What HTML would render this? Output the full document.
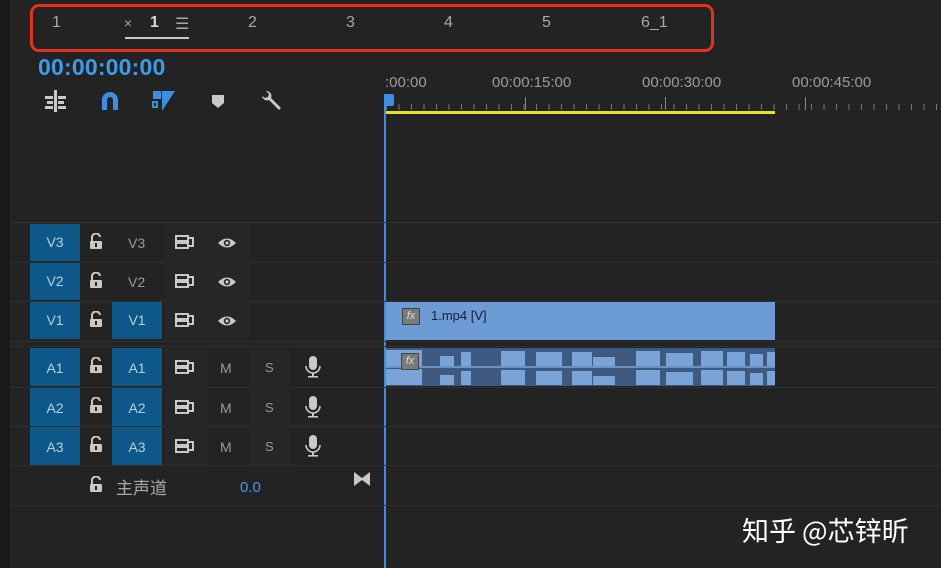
<!DOCTYPE html>
<html><head><meta charset="utf-8"><style>
body{margin:0;width:941px;height:568px;background:#232323;overflow:hidden;position:relative;font-family:"Liberation Sans","Noto Sans CJK SC",sans-serif}
.a{position:absolute}
.tab{position:absolute;top:14px;color:#a8a8a8;font-size:16px}
.row{position:absolute;left:10px;width:931px;height:1px;background:#303030}
.blue{position:absolute;background:#0d5888;color:#b8cfe0;font-size:14px;text-align:center;width:50px;height:37px;line-height:37px}
.lbl{position:absolute;color:#9a9a9a;font-size:14px}
.ic{position:absolute}
.t{position:absolute;top:73px;color:#9c9c9c;font-size:15px}
</style></head><body>
<div class="a" style="left:0;top:0;width:10px;height:568px;background:#1a1a1a"></div>
<div class="a" style="left:30px;top:4px;width:678px;height:42px;border:3px solid #e4321f;border-radius:9px"></div>
<span class="tab" style="left:52px">1</span>
<span class="tab" style="left:124px;font-size:14px;top:15px">×</span>
<span class="tab" style="left:150px;color:#d8d8d8;font-weight:bold">1</span>
<span class="tab" style="left:175px">☰</span>
<div class="a" style="left:125px;top:37px;width:64px;height:2px;background:#c8c8c8"></div>
<span class="tab" style="left:248px">2</span>
<span class="tab" style="left:346px">3</span>
<span class="tab" style="left:444px">4</span>
<span class="tab" style="left:542px">5</span>
<span class="tab" style="left:641px">6_1</span>
<div class="a" style="left:38px;top:54px;color:#3d9be9;font-size:23px;font-weight:bold;letter-spacing:0.2px">00:00:00:00</div>
<!-- toolbar icons -->
<svg class="ic" style="left:44px;top:90px" width="24" height="22"><g fill="#c9c9c9"><rect x="10" y="0" width="3" height="22"/><rect x="1" y="6" width="8" height="3"/><rect x="14" y="6" width="8" height="3"/><rect x="3" y="11" width="6" height="3"/><rect x="14" y="11" width="6" height="3"/><rect x="1" y="16" width="8" height="3"/><rect x="14" y="16" width="8" height="3"/></g></svg>
<svg class="ic" style="left:99px;top:90px" width="22" height="22"><path d="M3 20V10a8 8 0 0 1 16 0v10h-5V10a3 3 0 0 0-6 0v10z" fill="#3c8fe0"/></svg>
<svg class="ic" style="left:151px;top:89px" width="26" height="24"><rect x="2" y="2" width="8" height="8" fill="#3c8fe0"/><path d="M2 13h4v5H2z" fill="none" stroke="#3c8fe0" stroke-width="2"/><path d="M11 2h13L11 22z" fill="#3c8fe0"/></svg>
<svg class="ic" style="left:211px;top:94px" width="14" height="14"><path d="M1 1h12v8l-6 5-6-5z" fill="#c9c9c9"/></svg>
<svg class="ic" style="left:259px;top:89px" width="24" height="24"><path d="M3 7a5 5 0 0 0 7 4l10 10 2-2-10-10a5 5 0 0 0-5-7l3 3-1 3-3 1z" fill="#c9c9c9"/></svg>
<!-- ruler -->
<span class="t" style="left:385px;top:74px">:00:00</span>
<span class="t" style="left:492px;top:74px">00:00:15:00</span>
<span class="t" style="left:642px;top:74px">00:00:30:00</span>
<span class="t" style="left:792px;top:74px">00:00:45:00</span>
<div class="a" style="left:386px;top:104px;width:555px;height:6px;background:repeating-linear-gradient(90deg,#777 0 1px,transparent 1px 12.5px)"></div>
<div class="a" style="left:525px;top:97px;width:1px;height:13px;background:#888"></div>
<div class="a" style="left:665px;top:97px;width:1px;height:13px;background:#888"></div>
<div class="a" style="left:805px;top:97px;width:1px;height:13px;background:#888"></div>
<div class="a" style="left:386px;top:111px;width:389px;height:3px;background:#e8e324"></div>
<div class="a" style="left:384px;top:94px;width:2px;height:474px;background:#3d8de0"></div>
<div class="a" style="left:385px;top:94px;width:9px;height:12px;background:#3d8de0;border-radius:2px"></div>
<!-- rows -->
<div class="row" style="top:222px;background:#333"></div>
<div class="row" style="top:262px"></div>
<div class="row" style="top:301px"></div>
<div class="row" style="top:341px"></div>
<div class="row" style="top:346px"></div>
<div class="row" style="top:387px"></div>
<div class="row" style="top:426px"></div>
<div class="row" style="top:465px"></div>
<div class="row" style="top:505px"></div>
<div class="a" style="left:165px;top:224px;width:85px;height:116px;background:#262626"></div>
<div class="a" style="left:165px;top:348px;width:43px;height:117px;background:#262626"></div>
<div class="a" style="left:250px;top:348px;width:40px;height:117px;background:#262626"></div>
<div class="blue" style="left:30px;top:224px">V3</div>
<div class="blue" style="left:30px;top:263px">V2</div>
<div class="blue" style="left:30px;top:302px">V1</div>
<div class="blue" style="left:112px;top:302px">V1</div>
<div class="lbl" style="left:128px;top:235px">V3</div>
<div class="lbl" style="left:128px;top:274px">V2</div>
<div class="blue" style="left:30px;top:348px;height:38px;line-height:40px">A1</div>
<div class="blue" style="left:30px;top:388px;height:38px;line-height:40px">A2</div>
<div class="blue" style="left:30px;top:427px;height:38px;line-height:40px">A3</div>
<div class="blue" style="left:112px;top:348px;height:38px;line-height:40px">A1</div>
<div class="blue" style="left:112px;top:388px;height:38px;line-height:40px">A2</div>
<div class="blue" style="left:112px;top:427px;height:38px;line-height:40px">A3</div>
<svg width="0" height="0" style="position:absolute"><defs>
<g id="lk"><path d="M3 8V5a4 4 0 0 1 8-1" fill="none" stroke="#c9c9c9" stroke-width="2"/><rect x="1" y="8" width="12" height="8" rx="1" fill="#c9c9c9"/><rect x="6" y="10" width="2" height="4" fill="#232323"/></g>
<g id="tg" fill="none" stroke="#c9c9c9" stroke-width="2"><rect x="1" y="2" width="12" height="5"/><rect x="1" y="9" width="12" height="5"/><rect x="13" y="4" width="5" height="8"/></g>
<g id="ey"><path d="M1 7q9-9 18 0q-9 9-18 0z" fill="#c9c9c9"/><circle cx="10" cy="7" r="3.2" fill="#232323"/><circle cx="10" cy="7" r="1.6" fill="#c9c9c9"/></g>
<g id="mc" fill="#c9c9c9"><rect x="4" y="0" width="8" height="14" rx="4"/><path d="M1 10a7 7 0 0 0 14 0" fill="none" stroke="#c9c9c9" stroke-width="1.6"/><rect x="7" y="17" width="2" height="3"/><rect x="3" y="20" width="10" height="1.6"/></g>
</defs></svg>
<svg class="ic" style="left:89px;top:233px" width="14" height="17"><use href="#lk"/></svg>
<svg class="ic" style="left:89px;top:272px" width="14" height="17"><use href="#lk"/></svg>
<svg class="ic" style="left:89px;top:311px" width="14" height="17"><use href="#lk"/></svg>
<svg class="ic" style="left:89px;top:357px" width="14" height="17"><use href="#lk"/></svg>
<svg class="ic" style="left:89px;top:397px" width="14" height="17"><use href="#lk"/></svg>
<svg class="ic" style="left:89px;top:436px" width="14" height="17"><use href="#lk"/></svg>
<svg class="ic" style="left:89px;top:476px" width="14" height="17"><use href="#lk"/></svg>
<svg class="ic" style="left:175px;top:234px" width="20" height="16"><use href="#tg"/></svg>
<svg class="ic" style="left:175px;top:273px" width="20" height="16"><use href="#tg"/></svg>
<svg class="ic" style="left:175px;top:312px" width="20" height="16"><use href="#tg"/></svg>
<svg class="ic" style="left:175px;top:359px" width="20" height="16"><use href="#tg"/></svg>
<svg class="ic" style="left:175px;top:399px" width="20" height="16"><use href="#tg"/></svg>
<svg class="ic" style="left:175px;top:438px" width="20" height="16"><use href="#tg"/></svg>
<svg class="ic" style="left:217px;top:236px" width="20" height="14"><use href="#ey"/></svg>
<svg class="ic" style="left:217px;top:275px" width="20" height="14"><use href="#ey"/></svg>
<svg class="ic" style="left:217px;top:314px" width="20" height="14"><use href="#ey"/></svg>
<div class="lbl" style="left:220px;top:360px;font-size:14px">M</div>
<div class="lbl" style="left:220px;top:400px;font-size:14px">M</div>
<div class="lbl" style="left:220px;top:439px;font-size:14px">M</div>
<div class="lbl" style="left:265px;top:360px;font-size:13px">S</div>
<div class="lbl" style="left:265px;top:400px;font-size:13px">S</div>
<div class="lbl" style="left:265px;top:439px;font-size:13px">S</div>
<svg class="ic" style="left:305px;top:356px" width="16" height="22"><use href="#mc"/></svg>
<svg class="ic" style="left:305px;top:396px" width="16" height="22"><use href="#mc"/></svg>
<svg class="ic" style="left:305px;top:435px" width="16" height="22"><use href="#mc"/></svg>
<div class="a" style="left:116px;top:474px;color:#a8a8a8;font-size:17px">主声道</div>
<div class="a" style="left:240px;top:479px;color:#3d9be9;font-size:15px">0.0</div>
<svg class="ic" style="left:353px;top:471px" width="18" height="16"><path d="M1 1l8 6 8-6v14l-8-6-8 6z" fill="#c9c9c9"/></svg>
<!-- clips -->
<div class="a" style="left:386px;top:302px;width:389px;height:38px;background:#6d9bd3"></div>
<div class="a" style="left:402px;top:308px;width:16px;height:15px;background:#7a7a7a;border:1px solid #444;color:#ddd;font-size:11px;font-style:italic;line-height:15px;text-align:center">fx</div>
<div class="a" style="left:431px;top:308px;color:#10213a;font-size:13px">1.mp4 [V]</div>
<svg class="a" style="left:386px;top:348px" width="389" height="38">
<rect width="389" height="38" fill="#3e5a80"/>
<g fill="#7aa4d8">
<rect x="0" y="2" width="36" height="16"/><rect x="0" y="21" width="36" height="16"/>
<rect x="54" y="8" width="14" height="10"/><rect x="54" y="27" width="14" height="10"/>
<rect x="75" y="4" width="10" height="14"/><rect x="75" y="23" width="10" height="14"/>
<rect x="115" y="3" width="24" height="15"/><rect x="115" y="22" width="24" height="15"/>
<rect x="150" y="4" width="26" height="14"/><rect x="150" y="23" width="26" height="14"/>
<rect x="186" y="4" width="20" height="14"/><rect x="186" y="23" width="20" height="14"/>
<rect x="207" y="9" width="22" height="9"/><rect x="207" y="28" width="22" height="9"/>
<rect x="250" y="3" width="24" height="15"/><rect x="250" y="22" width="24" height="15"/>
<rect x="280" y="5" width="27" height="13"/><rect x="280" y="24" width="27" height="13"/>
<rect x="315" y="3" width="22" height="15"/><rect x="315" y="22" width="22" height="15"/>
<rect x="341" y="4" width="18" height="14"/><rect x="341" y="23" width="18" height="14"/>
<rect x="364" y="6" width="13" height="12"/><rect x="364" y="25" width="13" height="12"/>
<rect x="381" y="4" width="8" height="14"/><rect x="381" y="23" width="8" height="14"/>
</g>
<rect y="18" width="389" height="2" fill="#6d93c4"/>
</svg>
<div class="a" style="left:401px;top:353px;width:16px;height:15px;background:#7a7a7a;border:1px solid #444;color:#ddd;font-size:11px;font-style:italic;line-height:15px;text-align:center">fx</div>
<div class="a" style="left:742px;top:510px;color:#fff;font-size:27px;font-family:'Noto Sans CJK SC',sans-serif">知乎 @芯锌昕</div>
</body></html>
